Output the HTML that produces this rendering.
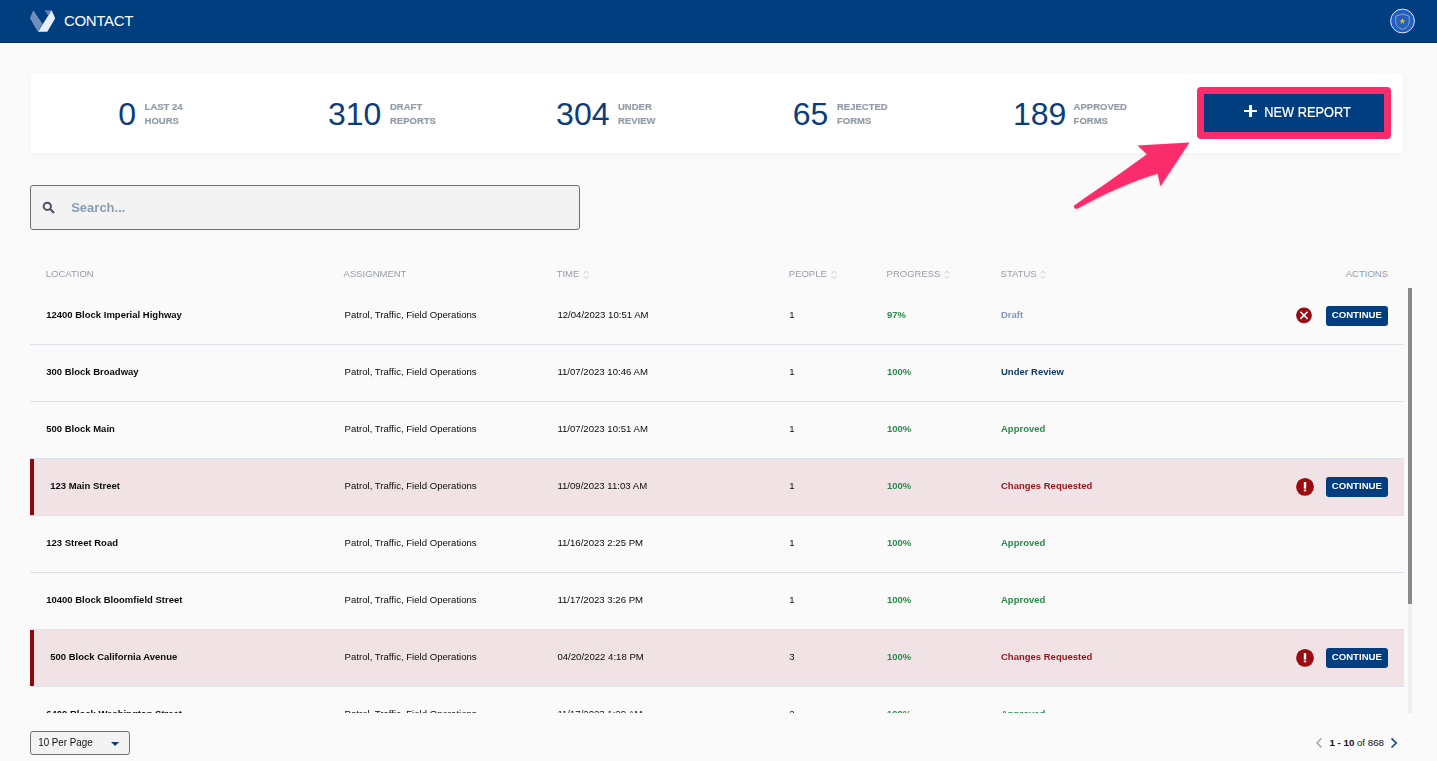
<!DOCTYPE html>
<html><head><meta charset="utf-8">
<style>
html,body{margin:0;padding:0}
body{width:1437px;height:761px;overflow:hidden;background:#fafafb;position:relative;font-family:"Liberation Sans",sans-serif}
.t{position:absolute;line-height:1;white-space:nowrap}
.a{position:absolute}
</style></head><body>
<div class="a" style="left:0;top:0;width:1437px;height:42px;background:#003e80"></div>
<div class="a" style="left:0;top:42px;width:1437px;height:1px;background:#0a3160"></div>
<svg class="a" style="left:0;top:0" width="70" height="42" viewBox="0 0 70 42">
<polygon points="33.3,10.3 29.9,18.2 37.8,31.6 42.4,23.8" fill="#6f8fbf"/>
<polygon points="44.5,10.2 51.6,10.2 48.1,15.6" fill="#5c80b8"/>
<polygon points="51.6,10.2 55.2,18.2 47.3,31.8 38,31.8" fill="#e9eef7"/>
</svg>
<div class="t" style="left:64px;top:13.20px;font-size:15px;color:#ffffff;font-weight:400;letter-spacing:-0.32px">CONTACT</div>
<svg class="a" style="left:1389px;top:8px" width="27" height="27" viewBox="0 0 27 27">
<circle cx="13.5" cy="13" r="11.9" fill="#1e5fc9" stroke="#dfe8ff" stroke-width="1"/>
<path d="M13.5 6 L20.2 8.2 L20.2 13.6 C20.2 17.6 17.2 20 13.5 21.5 C9.8 20 6.8 17.6 6.8 13.6 L6.8 8.2 Z" fill="none" stroke="#a8a68a" stroke-width="1"/>
<polygon points="13.5,10 14.4,12.2 16.6,12.3 14.9,13.7 15.5,15.9 13.5,14.6 11.5,15.9 12.1,13.7 10.4,12.3 12.6,12.2" fill="#c9b54a"/>
</svg>
<div class="a" style="left:31px;top:74px;width:1372px;height:79px;background:#fff;border-radius:1px;box-shadow:0 2px 6px rgba(0,0,0,0.045)"></div>
<div class="t" style="left:118.3px;top:97.91px;font-size:32px;color:#0c3c7c;font-weight:400;">0</div>
<div class="t" style="left:144.6px;top:101.66px;font-size:9.5px;color:#949ca7;font-weight:700;transform:scaleY(1.04);transform-origin:0 8.04px;-webkit-text-stroke:0.2px #949ca7">LAST 24</div>
<div class="t" style="left:144.6px;top:115.56px;font-size:9.5px;color:#949ca7;font-weight:700;transform:scaleY(1.04);transform-origin:0 8.04px;-webkit-text-stroke:0.2px #949ca7">HOURS</div>
<div class="t" style="left:327.9px;top:97.91px;font-size:32px;color:#0c3c7c;font-weight:400;">310</div>
<div class="t" style="left:390px;top:101.66px;font-size:9.5px;color:#949ca7;font-weight:700;transform:scaleY(1.04);transform-origin:0 8.04px;-webkit-text-stroke:0.2px #949ca7">DRAFT</div>
<div class="t" style="left:390px;top:115.56px;font-size:9.5px;color:#949ca7;font-weight:700;transform:scaleY(1.04);transform-origin:0 8.04px;-webkit-text-stroke:0.2px #949ca7">REPORTS</div>
<div class="t" style="left:556.1px;top:97.91px;font-size:32px;color:#0c3c7c;font-weight:400;">304</div>
<div class="t" style="left:618px;top:101.66px;font-size:9.5px;color:#949ca7;font-weight:700;transform:scaleY(1.04);transform-origin:0 8.04px;-webkit-text-stroke:0.2px #949ca7">UNDER</div>
<div class="t" style="left:618px;top:115.56px;font-size:9.5px;color:#949ca7;font-weight:700;transform:scaleY(1.04);transform-origin:0 8.04px;-webkit-text-stroke:0.2px #949ca7">REVIEW</div>
<div class="t" style="left:792.8px;top:97.91px;font-size:32px;color:#0c3c7c;font-weight:400;">65</div>
<div class="t" style="left:837px;top:101.66px;font-size:9.5px;color:#949ca7;font-weight:700;transform:scaleY(1.04);transform-origin:0 8.04px;-webkit-text-stroke:0.2px #949ca7">REJECTED</div>
<div class="t" style="left:837px;top:115.56px;font-size:9.5px;color:#949ca7;font-weight:700;transform:scaleY(1.04);transform-origin:0 8.04px;-webkit-text-stroke:0.2px #949ca7">FORMS</div>
<div class="t" style="left:1013px;top:97.91px;font-size:32px;color:#0c3c7c;font-weight:400;">189</div>
<div class="t" style="left:1073.6px;top:101.66px;font-size:9.5px;color:#949ca7;font-weight:700;transform:scaleY(1.04);transform-origin:0 8.04px;-webkit-text-stroke:0.2px #949ca7">APPROVED</div>
<div class="t" style="left:1073.6px;top:115.56px;font-size:9.5px;color:#949ca7;font-weight:700;transform:scaleY(1.04);transform-origin:0 8.04px;-webkit-text-stroke:0.2px #949ca7">FORMS</div>
<div class="a" style="left:1197px;top:87px;width:194px;height:52px;background:#fa2c6c;border-radius:4px"></div>
<div class="a" style="left:1204px;top:94px;width:180px;height:38px;background:#003e80"></div>
<div class="a" style="left:1244.2px;top:109.9px;width:12.8px;height:2.4px;background:#fff"></div>
<div class="a" style="left:1249.4px;top:104.7px;width:2.4px;height:12.6px;background:#fff"></div>
<div class="t" style="left:1264.3px;top:106.56px;font-size:12.8px;color:#ffffff;font-weight:400;-webkit-text-stroke:0.2px #fff;transform:scaleY(1.09);transform-origin:0 10.84px">NEW REPORT</div>
<svg class="a" style="left:1060px;top:130px;filter:drop-shadow(0 1px 1px rgba(0,0,0,0.18))" width="140" height="90" viewBox="1060 130 140 90">
<path d="M1074.5,205.2 C1098,189 1124,171 1147,154.2 L1137.5,145.5 L1189.5,142.4 L1160.5,186.2 L1157.6,173.7 C1132,181 1104,194 1077.5,208.5 C1075,209.5 1073,207 1074.5,205.2 Z" fill="#fa2c6c"/>
</svg>
<div class="a" style="left:30px;top:185px;width:548px;height:43px;border:1px solid #6f6f72;border-radius:3px;background:#f3f3f4"></div>
<svg class="a" style="left:42px;top:201px" width="14" height="14" viewBox="0 0 14 14">
<circle cx="5.3" cy="5.35" r="3.65" fill="none" stroke="#4c5166" stroke-width="1.95"/>
<line x1="7.9" y1="7.8" x2="12" y2="11.9" stroke="#4c5166" stroke-width="2.1" stroke-linecap="butt"/>
</svg>
<div class="t" style="left:71.2px;top:201.20px;font-size:13px;color:#8a9db5;font-weight:700;transform:scaleY(1.02);transform-origin:0 11.00px;">Search...</div>
<div class="t" style="left:45.8px;top:269.16px;font-size:9.5px;color:#979ca4;font-weight:400;transform:scaleY(1.02);transform-origin:0 8.04px;">LOCATION</div>
<div class="t" style="left:343.6px;top:269.16px;font-size:9.5px;color:#979ca4;font-weight:400;transform:scaleY(1.02);transform-origin:0 8.04px;">ASSIGNMENT</div>
<div class="t" style="left:556.6px;top:269.16px;font-size:9.5px;color:#979ca4;font-weight:400;transform:scaleY(1.02);transform-origin:0 8.04px;">TIME</div>
<svg class="a" style="left:582.8px;top:270px" width="6" height="10" viewBox="0 0 6 10"><polyline points="0.8,3.6 3,1.2 5.2,3.6" fill="none" stroke="#bfc3ca" stroke-width="0.9"/><polyline points="0.8,6.2 3,8.6 5.2,6.2" fill="none" stroke="#bfc3ca" stroke-width="0.9"/></svg>
<div class="t" style="left:788.8px;top:269.16px;font-size:9.5px;color:#979ca4;font-weight:400;transform:scaleY(1.02);transform-origin:0 8.04px;">PEOPLE</div>
<svg class="a" style="left:830.5px;top:270px" width="6" height="10" viewBox="0 0 6 10"><polyline points="0.8,3.6 3,1.2 5.2,3.6" fill="none" stroke="#bfc3ca" stroke-width="0.9"/><polyline points="0.8,6.2 3,8.6 5.2,6.2" fill="none" stroke="#bfc3ca" stroke-width="0.9"/></svg>
<div class="t" style="left:886.6px;top:269.16px;font-size:9.5px;color:#979ca4;font-weight:400;transform:scaleY(1.02);transform-origin:0 8.04px;">PROGRESS</div>
<svg class="a" style="left:944.1px;top:270px" width="6" height="10" viewBox="0 0 6 10"><polyline points="0.8,3.6 3,1.2 5.2,3.6" fill="none" stroke="#bfc3ca" stroke-width="0.9"/><polyline points="0.8,6.2 3,8.6 5.2,6.2" fill="none" stroke="#bfc3ca" stroke-width="0.9"/></svg>
<div class="t" style="left:1000.6px;top:269.16px;font-size:9.5px;color:#979ca4;font-weight:400;transform:scaleY(1.02);transform-origin:0 8.04px;">STATUS</div>
<svg class="a" style="left:1040.0px;top:270px" width="6" height="10" viewBox="0 0 6 10"><polyline points="0.8,3.6 3,1.2 5.2,3.6" fill="none" stroke="#bfc3ca" stroke-width="0.9"/><polyline points="0.8,6.2 3,8.6 5.2,6.2" fill="none" stroke="#bfc3ca" stroke-width="0.9"/></svg>
<div class="t" style="right:49px;top:269.16px;font-size:9.5px;color:#979ca4">ACTIONS</div>
<div class="a" style="left:0;top:288px;width:1437px;height:425px;overflow:hidden">
<div class="a" style="left:30px;top:56px;width:1374px;height:1px;background:#dde1e8"></div>
<div class="t" style="left:46.2px;top:21.86px;font-size:9.5px;color:#0a0a0a;font-weight:700;transform:scaleY(1.02);transform-origin:0 8.04px;">12400 Block Imperial Highway</div>
<div class="t" style="left:344.6px;top:21.77px;font-size:9.6px;color:#0a0a0a;font-weight:400;transform:scaleY(1.02);transform-origin:0 8.13px;">Patrol, Traffic, Field Operations</div>
<div class="t" style="left:557.4px;top:21.77px;font-size:9.6px;color:#0a0a0a;font-weight:400;transform:scaleY(1.02);transform-origin:0 8.13px;">12/04/2023 10:51 AM</div>
<div class="t" style="left:789.3px;top:21.77px;font-size:9.6px;color:#0a0a0a;font-weight:400;transform:scaleY(1.02);transform-origin:0 8.13px;">1</div>
<div class="t" style="left:887px;top:21.86px;font-size:9.5px;color:#2a8a4b;font-weight:700;transform:scaleY(1.02);transform-origin:0 8.04px;">97%</div>
<div class="t" style="left:1001px;top:21.86px;font-size:9.5px;color:#7f98ba;font-weight:700;transform:scaleY(1.02);transform-origin:0 8.04px;">Draft</div>
<svg class="a" style="left:1296px;top:19px" width="16" height="17" viewBox="0 0 16 17"><circle cx="8" cy="8.3" r="7.9" fill="#980c11"/><path d="M5 5.3 L11 11.3 M11 5.3 L5 11.3" stroke="#fff" stroke-width="1.6" stroke-linecap="square"/></svg>
<div class="a" style="left:1326px;top:18px;width:62px;height:20px;background:#003e80;border-radius:3px"></div>
<div class="t" style="left:1331.8px;top:22.17px;font-size:9.6px;color:#fff;font-weight:700;transform:scaleY(1.02);transform-origin:0 8.13px;">CONTINUE</div>
<div class="a" style="left:30px;top:113px;width:1374px;height:1px;background:#dde1e8"></div>
<div class="t" style="left:46.2px;top:78.86px;font-size:9.5px;color:#0a0a0a;font-weight:700;transform:scaleY(1.02);transform-origin:0 8.04px;">300 Block Broadway</div>
<div class="t" style="left:344.6px;top:78.77px;font-size:9.6px;color:#0a0a0a;font-weight:400;transform:scaleY(1.02);transform-origin:0 8.13px;">Patrol, Traffic, Field Operations</div>
<div class="t" style="left:557.4px;top:78.77px;font-size:9.6px;color:#0a0a0a;font-weight:400;transform:scaleY(1.02);transform-origin:0 8.13px;">11/07/2023 10:46 AM</div>
<div class="t" style="left:789.3px;top:78.77px;font-size:9.6px;color:#0a0a0a;font-weight:400;transform:scaleY(1.02);transform-origin:0 8.13px;">1</div>
<div class="t" style="left:887px;top:78.86px;font-size:9.5px;color:#2a8a4b;font-weight:700;transform:scaleY(1.02);transform-origin:0 8.04px;">100%</div>
<div class="t" style="left:1001px;top:78.86px;font-size:9.5px;color:#0f3a6e;font-weight:700;transform:scaleY(1.02);transform-origin:0 8.04px;">Under Review</div>
<div class="a" style="left:30px;top:170px;width:1374px;height:1px;background:#dde1e8"></div>
<div class="t" style="left:46.2px;top:135.86px;font-size:9.5px;color:#0a0a0a;font-weight:700;transform:scaleY(1.02);transform-origin:0 8.04px;">500 Block Main</div>
<div class="t" style="left:344.6px;top:135.77px;font-size:9.6px;color:#0a0a0a;font-weight:400;transform:scaleY(1.02);transform-origin:0 8.13px;">Patrol, Traffic, Field Operations</div>
<div class="t" style="left:557.4px;top:135.77px;font-size:9.6px;color:#0a0a0a;font-weight:400;transform:scaleY(1.02);transform-origin:0 8.13px;">11/07/2023 10:51 AM</div>
<div class="t" style="left:789.3px;top:135.77px;font-size:9.6px;color:#0a0a0a;font-weight:400;transform:scaleY(1.02);transform-origin:0 8.13px;">1</div>
<div class="t" style="left:887px;top:135.86px;font-size:9.5px;color:#2a8a4b;font-weight:700;transform:scaleY(1.02);transform-origin:0 8.04px;">100%</div>
<div class="t" style="left:1001px;top:135.86px;font-size:9.5px;color:#2a8a4b;font-weight:700;transform:scaleY(1.02);transform-origin:0 8.04px;">Approved</div>
<div class="a" style="left:30px;top:170.5px;width:1374px;height:56px;background:#f1e3e5"></div>
<div class="a" style="left:30px;top:170.5px;width:4px;height:56px;background:#8e0a10"></div>
<div class="a" style="left:30px;top:227px;width:1374px;height:1px;background:#dde1e8"></div>
<div class="t" style="left:50.2px;top:192.86px;font-size:9.5px;color:#0a0a0a;font-weight:700;transform:scaleY(1.02);transform-origin:0 8.04px;">123 Main Street</div>
<div class="t" style="left:344.6px;top:192.77px;font-size:9.6px;color:#0a0a0a;font-weight:400;transform:scaleY(1.02);transform-origin:0 8.13px;">Patrol, Traffic, Field Operations</div>
<div class="t" style="left:557.4px;top:192.77px;font-size:9.6px;color:#0a0a0a;font-weight:400;transform:scaleY(1.02);transform-origin:0 8.13px;">11/09/2023 11:03 AM</div>
<div class="t" style="left:789.3px;top:192.77px;font-size:9.6px;color:#0a0a0a;font-weight:400;transform:scaleY(1.02);transform-origin:0 8.13px;">1</div>
<div class="t" style="left:887px;top:192.86px;font-size:9.5px;color:#2a8a4b;font-weight:700;transform:scaleY(1.02);transform-origin:0 8.04px;">100%</div>
<div class="t" style="left:1001px;top:192.86px;font-size:9.5px;color:#961419;font-weight:700;transform:scaleY(1.02);transform-origin:0 8.04px;">Changes Requested</div>
<svg class="a" style="left:1296px;top:190px" width="18" height="18" viewBox="0 0 18 18"><circle cx="9" cy="8.9" r="8.9" fill="#9c0b10"/><rect x="7.8" y="4" width="2.4" height="6.6" fill="#fff"/><rect x="7.8" y="11.6" width="2.4" height="1.7" fill="#fff"/></svg>
<div class="a" style="left:1326px;top:189px;width:62px;height:20px;background:#003e80;border-radius:3px"></div>
<div class="t" style="left:1331.8px;top:193.17px;font-size:9.6px;color:#fff;font-weight:700;transform:scaleY(1.02);transform-origin:0 8.13px;">CONTINUE</div>
<div class="a" style="left:30px;top:284px;width:1374px;height:1px;background:#dde1e8"></div>
<div class="t" style="left:46.2px;top:249.86px;font-size:9.5px;color:#0a0a0a;font-weight:700;transform:scaleY(1.02);transform-origin:0 8.04px;">123 Street Road</div>
<div class="t" style="left:344.6px;top:249.77px;font-size:9.6px;color:#0a0a0a;font-weight:400;transform:scaleY(1.02);transform-origin:0 8.13px;">Patrol, Traffic, Field Operations</div>
<div class="t" style="left:557.4px;top:249.77px;font-size:9.6px;color:#0a0a0a;font-weight:400;transform:scaleY(1.02);transform-origin:0 8.13px;">11/16/2023 2:25 PM</div>
<div class="t" style="left:789.3px;top:249.77px;font-size:9.6px;color:#0a0a0a;font-weight:400;transform:scaleY(1.02);transform-origin:0 8.13px;">1</div>
<div class="t" style="left:887px;top:249.86px;font-size:9.5px;color:#2a8a4b;font-weight:700;transform:scaleY(1.02);transform-origin:0 8.04px;">100%</div>
<div class="t" style="left:1001px;top:249.86px;font-size:9.5px;color:#2a8a4b;font-weight:700;transform:scaleY(1.02);transform-origin:0 8.04px;">Approved</div>
<div class="a" style="left:30px;top:341px;width:1374px;height:1px;background:#dde1e8"></div>
<div class="t" style="left:46.2px;top:306.86px;font-size:9.5px;color:#0a0a0a;font-weight:700;transform:scaleY(1.02);transform-origin:0 8.04px;">10400 Block Bloomfield Street</div>
<div class="t" style="left:344.6px;top:306.77px;font-size:9.6px;color:#0a0a0a;font-weight:400;transform:scaleY(1.02);transform-origin:0 8.13px;">Patrol, Traffic, Field Operations</div>
<div class="t" style="left:557.4px;top:306.77px;font-size:9.6px;color:#0a0a0a;font-weight:400;transform:scaleY(1.02);transform-origin:0 8.13px;">11/17/2023 3:26 PM</div>
<div class="t" style="left:789.3px;top:306.77px;font-size:9.6px;color:#0a0a0a;font-weight:400;transform:scaleY(1.02);transform-origin:0 8.13px;">1</div>
<div class="t" style="left:887px;top:306.86px;font-size:9.5px;color:#2a8a4b;font-weight:700;transform:scaleY(1.02);transform-origin:0 8.04px;">100%</div>
<div class="t" style="left:1001px;top:306.86px;font-size:9.5px;color:#2a8a4b;font-weight:700;transform:scaleY(1.02);transform-origin:0 8.04px;">Approved</div>
<div class="a" style="left:30px;top:341.5px;width:1374px;height:56px;background:#f1e3e5"></div>
<div class="a" style="left:30px;top:341.5px;width:4px;height:56px;background:#8e0a10"></div>
<div class="a" style="left:30px;top:398px;width:1374px;height:1px;background:#dde1e8"></div>
<div class="t" style="left:50.2px;top:363.86px;font-size:9.5px;color:#0a0a0a;font-weight:700;transform:scaleY(1.02);transform-origin:0 8.04px;">500 Block California Avenue</div>
<div class="t" style="left:344.6px;top:363.77px;font-size:9.6px;color:#0a0a0a;font-weight:400;transform:scaleY(1.02);transform-origin:0 8.13px;">Patrol, Traffic, Field Operations</div>
<div class="t" style="left:557.4px;top:363.77px;font-size:9.6px;color:#0a0a0a;font-weight:400;transform:scaleY(1.02);transform-origin:0 8.13px;">04/20/2022 4:18 PM</div>
<div class="t" style="left:789.3px;top:363.77px;font-size:9.6px;color:#0a0a0a;font-weight:400;transform:scaleY(1.02);transform-origin:0 8.13px;">3</div>
<div class="t" style="left:887px;top:363.86px;font-size:9.5px;color:#2a8a4b;font-weight:700;transform:scaleY(1.02);transform-origin:0 8.04px;">100%</div>
<div class="t" style="left:1001px;top:363.86px;font-size:9.5px;color:#961419;font-weight:700;transform:scaleY(1.02);transform-origin:0 8.04px;">Changes Requested</div>
<svg class="a" style="left:1296px;top:361px" width="18" height="18" viewBox="0 0 18 18"><circle cx="9" cy="8.9" r="8.9" fill="#9c0b10"/><rect x="7.8" y="4" width="2.4" height="6.6" fill="#fff"/><rect x="7.8" y="11.6" width="2.4" height="1.7" fill="#fff"/></svg>
<div class="a" style="left:1326px;top:360px;width:62px;height:20px;background:#003e80;border-radius:3px"></div>
<div class="t" style="left:1331.8px;top:364.17px;font-size:9.6px;color:#fff;font-weight:700;transform:scaleY(1.02);transform-origin:0 8.13px;">CONTINUE</div>
<div class="a" style="left:30px;top:455px;width:1374px;height:1px;background:#dde1e8"></div>
<div class="t" style="left:46.2px;top:420.86px;font-size:9.5px;color:#0a0a0a;font-weight:700;transform:scaleY(1.02);transform-origin:0 8.04px;">6400 Block Washington Street</div>
<div class="t" style="left:344.6px;top:420.77px;font-size:9.6px;color:#0a0a0a;font-weight:400;transform:scaleY(1.02);transform-origin:0 8.13px;">Patrol, Traffic, Field Operations</div>
<div class="t" style="left:557.4px;top:420.77px;font-size:9.6px;color:#0a0a0a;font-weight:400;transform:scaleY(1.02);transform-origin:0 8.13px;">11/17/2023 1:29 AM</div>
<div class="t" style="left:789.3px;top:420.77px;font-size:9.6px;color:#0a0a0a;font-weight:400;transform:scaleY(1.02);transform-origin:0 8.13px;">2</div>
<div class="t" style="left:887px;top:420.86px;font-size:9.5px;color:#2a8a4b;font-weight:700;transform:scaleY(1.02);transform-origin:0 8.04px;">100%</div>
<div class="t" style="left:1001px;top:420.86px;font-size:9.5px;color:#2a8a4b;font-weight:700;transform:scaleY(1.02);transform-origin:0 8.04px;">Approved</div>
</div>
<div class="a" style="left:1408px;top:288px;width:4px;height:425px;background:#efefef"></div>
<div class="a" style="left:1408px;top:288px;width:4px;height:316px;background:#8a8a8a"></div>
<div class="a" style="left:30px;top:731px;width:98px;height:22px;border:1px solid #6f6f72;border-radius:3px;background:#f3f3f4"></div>
<div class="t" style="left:38.2px;top:737.60px;font-size:9.8px;color:#111;font-weight:400;transform:scaleY(1.02);transform-origin:0 8.30px;">10 Per Page</div>
<svg class="a" style="left:111px;top:741px" width="9" height="6" viewBox="0 0 9 6"><polygon points="0,1 8.2,1 4.1,5" fill="#0c3c7c"/></svg>
<svg class="a" style="left:1315px;top:737px" width="9" height="12" viewBox="0 0 9 12"><polyline points="6.5,1.3 2,6 6.5,10.5" fill="none" stroke="#a3a7ae" stroke-width="1.5"/></svg>
<div class="t" style="left:1329.5px;top:737.59px;font-size:9.7px;color:#111"><b>1 - 10</b> of 868</div>
<svg class="a" style="left:1390px;top:737px" width="9" height="12" viewBox="0 0 9 12"><polyline points="1.5,1.3 6.2,6 1.5,10.5" fill="none" stroke="#1a4a8a" stroke-width="1.7"/></svg>
</body></html>
